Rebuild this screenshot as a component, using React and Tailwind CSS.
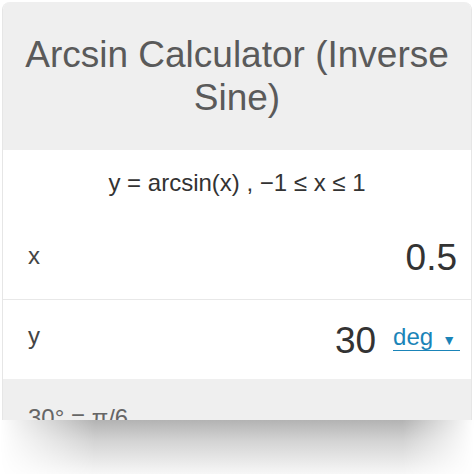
export default function App() {
  const font = { fontFamily: '"Liberation Sans", Arial, Helvetica, sans-serif' };
  return (
    <div className="w-[474px] h-[474px] bg-white overflow-hidden flex flex-col" style={font}>
      <div className="mx-[2px] mt-[2px] h-[418px] overflow-hidden rounded-t-[8px] border-x border-[#e6e6e6] flex flex-col">
        <div className="h-[148px] shrink-0 bg-[#efefef] flex items-center justify-center px-4">
          <h1 className="text-center text-[37px] leading-[43px] text-[#5a5a5a] font-normal">
            Arcsin Calculator (Inverse Sine)
          </h1>
        </div>
        <div className="bg-white">
          <div className="h-[46px] pt-[21px] text-center text-[24px] leading-[24px] text-[#333]">
            y = arcsin(x) , −1 ≤ x ≤ 1
          </div>
          <div className="h-[104px] border-b border-[#e8e8e8] flex justify-between items-start pl-[25px] pr-[14px]">
            <span className="mt-[48px] text-[24px] leading-[24px] text-[#444]">x</span>
            <span className="mt-[43px] text-[37px] leading-none text-[#333]">0.5</span>
          </div>
          <div className="h-[79px] flex items-start pl-[25px] pr-[11px]">
            <span className="mt-[24px] text-[24px] leading-[24px] text-[#444]">y</span>
            <span className="ml-auto mt-[22px] text-[37px] leading-none text-[#333]">30</span>
            <span className="ml-[17px] mt-[25px] flex items-baseline border-b border-[#1a84b8] pb-[1px] text-[24px] leading-[24px] text-[#1a84b8]">
              deg
              <span className="ml-[9px] mr-[4px] text-[14px] leading-none">▼</span>
            </span>
          </div>
        </div>
        <div className="flex-1 bg-[#efefef] pl-[25px] pt-[27px]">
          <span className="text-[24px] leading-[24px] text-[#666]">30° = π/6</span>
        </div>
      </div>
      <div className="h-[54px] bg-[linear-gradient(to_bottom,#b3b3b3,#d4d4d4_40%,#f7f7f7)] [mask-image:linear-gradient(to_right,transparent,black_20%,black_85%,transparent)]"></div>
    </div>
  );
}
